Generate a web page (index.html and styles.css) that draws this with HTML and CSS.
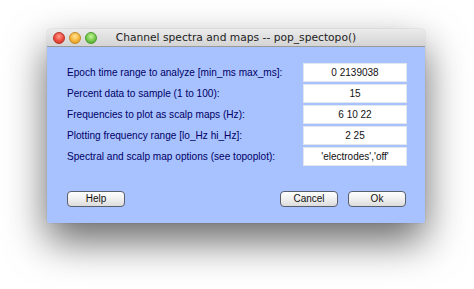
FILE: index.html
```html
<!DOCTYPE html>
<html>
<head>
<meta charset="utf-8">
<link rel="stylesheet" href="styles.css">
</head>
<body>
<div class="window">
  <div class="titlebar">
    <div class="lights">
      <span class="light red"></span>
      <span class="light yellow"></span>
      <span class="light green"></span>
    </div>
    <div class="title">Channel spectra and maps -- pop_spectopo()</div>
  </div>
  <div class="content">
    <div class="form">
      <div class="row"><span class="label">Epoch time range to analyze [min_ms max_ms]:</span><span class="field">0 2139038</span></div>
      <div class="row"><span class="label">Percent data to sample (1 to 100):</span><span class="field">15</span></div>
      <div class="row"><span class="label">Frequencies to plot as scalp maps (Hz):</span><span class="field">6 10 22</span></div>
      <div class="row"><span class="label">Plotting frequency range [lo_Hz hi_Hz]:</span><span class="field">2 25</span></div>
      <div class="row"><span class="label">Spectral and scalp map options (see topoplot):</span><span class="field">'electrodes','off'</span></div>
    </div>
    <div class="buttons">
      <span class="btn">Help</span>
      <span class="spacer"></span>
      <span class="btn">Cancel</span>
      <span class="btn">Ok</span>
    </div>
  </div>
</div>
</body>
</html>
```
FILE: styles.css
```css
html, body {
  margin: 0;
  padding: 0;
  background: #ffffff;
}
body {
  padding: 29px 0 0 47px;
  width: 474px;
  height: 289px;
  box-sizing: border-box;
  overflow: hidden;
}
.window {
  width: 378px;
  height: 194px;
  border-radius: 4px 4px 3px 3px;
  box-shadow: 0 18px 40px rgba(0,0,0,0.6), 0 0 1px rgba(0,0,0,0.4);
  display: flex;
  flex-direction: column;
  overflow: hidden;
}
.titlebar {
  height: 17px;
  background: linear-gradient(#ebebeb, #d4d4d4);
  border-bottom: 1px solid #9a9a9a;
  display: flex;
  align-items: center;
  position: relative;
}
.lights {
  display: flex;
  gap: 4px;
  padding-left: 6px;
}
.light {
  width: 12px;
  height: 12px;
  border-radius: 50%;
  box-sizing: border-box;
}
.red {
  background: radial-gradient(circle at 50% 35%, #ff9a8a 0%, #ec4b3e 55%, #c8281d 100%);
  border: 1px solid #b3352a;
}
.yellow {
  background: radial-gradient(circle at 50% 35%, #ffe49a 0%, #f5b53a 55%, #d88f12 100%);
  border: 1px solid #c28b25;
}
.green {
  background: radial-gradient(circle at 50% 35%, #c6f59a 0%, #72c84a 55%, #3f9a25 100%);
  border: 1px solid #4e9a31;
}
.title {
  position: absolute;
  left: 0;
  right: 0;
  top: 0;
  height: 17px;
  line-height: 17px;
  text-align: center;
  font-family: "DejaVu Sans", sans-serif;
  font-size: 10.7px;
  color: #222222;
}
.content {
  flex: 1;
  background: #a8c2ff;
  padding: 16px 18px 16px 20px;
  display: flex;
  flex-direction: column;
  justify-content: space-between;
}
.form {
  display: flex;
  flex-direction: column;
  gap: 2px;
}
.row {
  display: flex;
  align-items: center;
  justify-content: space-between;
  height: 19px;
}
.label {
  font-family: "Liberation Sans", Arial, sans-serif;
  font-size: 10.1px;
  color: #000066;
}
.field {
  width: 104px;
  height: 19px;
  line-height: 19px;
  background: #ffffff;
  text-align: center;
  font-family: "Liberation Sans", Arial, sans-serif;
  font-size: 10px;
  color: #111111;
  box-shadow: inset 0 0 0 1px #e2e6ee;
}
.buttons {
  display: flex;
  align-items: center;
  gap: 10px;
  padding-right: 1px;
}
.spacer {
  flex: 1;
}
.btn {
  width: 58px;
  height: 16px;
  box-sizing: border-box;
  border: 1px solid #5a5e6e;
  border-radius: 4px;
  background: linear-gradient(#ffffff, #ececec 60%, #dcdcdc);
  font-family: "Liberation Sans", Arial, sans-serif;
  font-size: 10px;
  line-height: 14px;
  text-align: center;
  color: #111111;
}
```
